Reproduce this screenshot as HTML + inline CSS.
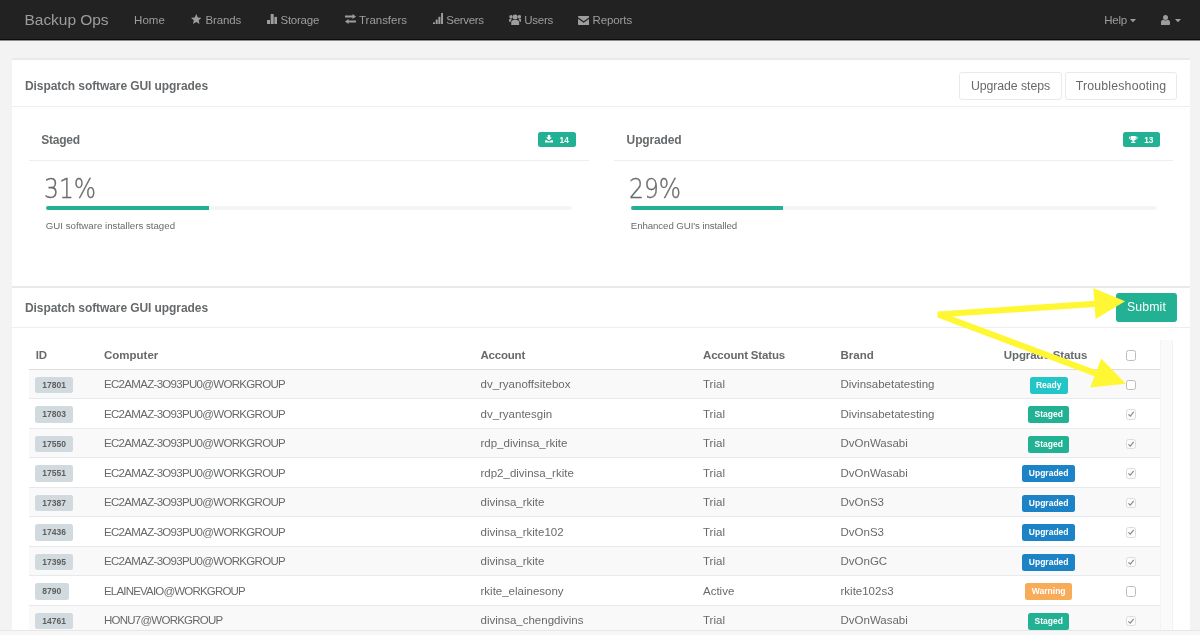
<!DOCTYPE html>
<html lang="en">
<head>
<meta charset="utf-8">
<title>Backup Ops</title>
<style>
*{box-sizing:border-box;margin:0;padding:0}
html,body{width:1200px;height:635px;overflow:hidden}
body{background:#f3f3f4;font-family:"Liberation Sans",sans-serif;color:#676a6c;font-size:12px;position:relative}
#wrap{position:absolute;left:-10px;top:-10px;width:1220px;height:655px;background:#f3f3f4;will-change:transform}
#in{position:absolute;left:10px;top:10px;width:1200px;height:635px}
#navbg{position:absolute;left:-10px;top:-10px;width:1220px;height:51px;background:#222;border-bottom:1px solid #8c8c8c;box-shadow:inset 0 -1px 0 #0c0c0c}
#nav{position:absolute;left:0;top:0;width:1200px;height:40px}
#nav .brand{position:absolute;left:24.5px;top:9px;font-size:15.5px;color:#9d9d9d;line-height:22px;letter-spacing:-.04px}
#nav .it{position:absolute;top:11.5px;font-size:11.5px;color:#9d9d9d;line-height:17px;white-space:nowrap}
#nav svg{position:absolute;fill:#9d9d9d}
.panel{position:absolute;left:12px;width:1178px;background:#fff;border-top:2px solid #e7eaec}
.hr{position:absolute;height:1px;background:#eceef0}
.h5{position:absolute;font-weight:bold;font-size:12px;color:#676a6c;line-height:16px;white-space:nowrap}
.btnw{position:absolute;top:72px;height:28px;border:1px solid #e7eaec;border-radius:3px;background:#fff;color:#676a6c;font-size:12.3px;line-height:27px;text-align:center;white-space:nowrap}
.badge{position:absolute;height:14.5px;border-radius:2.5px;background:#22b193;color:#fff;font-weight:bold;font-size:8.3px;line-height:14.5px;white-space:nowrap}
.badge svg{position:absolute;fill:#fff}
.badge span{position:absolute;top:.3px}
.big{position:absolute;font-family:"DejaVu Sans Light","DejaVu Sans","Liberation Sans",sans-serif;font-weight:200;font-size:26.3px;color:#676a6c;line-height:30px;white-space:nowrap;transform:scaleX(.89);transform-origin:0 0;-webkit-text-stroke:.35px #676a6c}
.prog{position:absolute;height:4px;background:#f5f5f5;border-radius:2px;overflow:hidden}
.prog i{display:block;height:4px;background:#22b193}
.small{position:absolute;font-size:9.7px;line-height:12px;color:#676a6c;white-space:nowrap}

#tbl{position:absolute;left:0;top:0;width:1200px;height:635px;overflow:hidden}
.th{position:absolute;top:347px;font-weight:bold;font-size:11.5px;line-height:16px;color:#676a6c;white-space:nowrap}
.hl{position:absolute;left:29px;top:369px;width:1131px;height:1px;background:#dddddd}
.tr{position:absolute;left:29px;width:1131px;height:29.5px;border-top:1px solid #e7eaec;background:#fff}
.tr.odd{background:#f9f9f9}
.td{position:absolute;top:7px;font-size:11.5px;line-height:16px;color:#676a6c;white-space:nowrap}
.odd .td{top:6.5px}
.c1{left:75px;letter-spacing:-.69px}
.c2{left:451.5px}
.c3{left:674px}
.c4{left:811.5px}
.id{position:absolute;left:6px;top:7px;height:16.5px;padding:0 7.3px;border-radius:2.5px;background:#d1dade;color:#5e5e5e;font-weight:bold;font-size:8.5px;line-height:17px;white-space:nowrap}
.lbw{position:absolute;left:959.7px;width:120px;top:7px;height:17px;text-align:center}
.lb{display:inline-block;height:17px;padding:0 6.4px;border-radius:2.5px;color:#fff;font-weight:bold;font-size:8.5px;line-height:17.8px;white-space:nowrap;vertical-align:top}
.upgraded{padding:0 6.8px}
.ready{background:#23c6c8}.staged{background:#22b193}.upgraded{background:#1c84c6}.warning{background:#f8ac59}
.cb{position:absolute;left:1125.5px;width:10.5px;height:10.5px;border:1px solid #bcbcbc;border-radius:2.5px;background:#fff}
.tr .cb{left:1096.5px;top:10px}
.cb.on{border-color:#dcdcdc;background:#fcfcfc}
.cb svg{position:absolute;left:-1px;top:-1px}
#sb{position:absolute;left:1160px;top:340px;width:12.5px;height:295px;background:#fafafa;border-left:1px solid #f3f3f3;border-right:1px solid #f1f1f1}
#submit{position:absolute;left:1116px;top:293px;width:61px;height:28.5px;border-radius:3px;background:#22b193;color:#fff;font-size:12.3px;letter-spacing:.1px;line-height:29.5px;text-align:center}
#foot{position:absolute;left:-10px;top:630px;width:1220px;height:15px;background:#f7f7f7;border-top:1px solid #e6e6e6}
#arrows{position:absolute;left:0;top:0}
</style>
</head>
<body>
<div id="wrap"><div id="in">
<div id="navbg"></div>
<div id="nav">
  <div class="brand">Backup Ops</div>
  <div class="it" style="left:134px;letter-spacing:.08px">Home</div>
  <svg style="left:190.5px;top:14px" width="10.5" height="10" viewBox="0 0 21 20"><path d="M10.5 0 L13.6 6.9 L21 7.6 L15.4 12.6 L17 20 L10.5 16.2 L4 20 L5.6 12.6 L0 7.6 L7.4 6.9 Z"/></svg>
  <div class="it" style="left:205.5px;letter-spacing:-.16px">Brands</div>
  <svg style="left:267px;top:14px" width="10.4" height="10.4" viewBox="0 0 10.4 10.4"><rect x="0" y="6" width="3" height="4.4"/><rect x="3.7" y="0" width="3" height="10.4"/><rect x="7.4" y="2.9" width="3" height="7.5"/></svg>
  <div class="it" style="left:280.5px;letter-spacing:-.25px">Storage</div>
  <svg style="left:345px;top:13.5px" width="11" height="10" viewBox="0 0 22 20"><path d="M0 3.2 H15 V0 L22 5 L15 10 V6.8 H0 Z M22 13.2 H7 V10 L0 15 L7 20 V16.8 H22 Z"/></svg>
  <div class="it" style="left:359px;letter-spacing:-.02px">Transfers</div>
  <svg style="left:433px;top:13px" width="10.2" height="11.4" viewBox="0 0 10.2 11.4"><rect x="0" y="9.4" width="2" height="2"/><rect x="2.7" y="6.6" width="2" height="4.8"/><rect x="5.4" y="3.8" width="2" height="7.6"/><rect x="8.1" y="0" width="2" height="11.4"/></svg>
  <div class="it" style="left:446.3px;letter-spacing:-.32px">Servers</div>
  <svg style="left:509px;top:13.5px" width="12.4" height="11.5" viewBox="0 0 24.8 23"><circle cx="12.4" cy="6" r="5"/><circle cx="4" cy="5.5" r="3.4"/><circle cx="20.8" cy="5.5" r="3.4"/><path d="M4.5 23 V17 C4.5 13.5 7 12 9 12 H15.8 C17.8 12 20.3 13.5 20.3 17 V23 Z"/><path d="M0 15.5 V12.5 C0 10.3 1.6 9.4 3 9.4 H6.5 C5 10.6 3.6 12.5 3.6 15.5 Z M24.8 15.5 V12.5 C24.8 10.3 23.2 9.4 21.8 9.4 H18.3 C19.8 10.6 21.2 12.5 21.2 15.5 Z"/></svg>
  <div class="it" style="left:524.3px;letter-spacing:-.25px">Users</div>
  <svg style="left:578px;top:15.5px" width="11.4" height="9" viewBox="0 0 22.8 18"><path d="M0 1.5 C0 .6 .6 0 1.5 0 H21.3 C22.2 0 22.8 .6 22.8 1.5 V2.6 L11.4 10.6 L0 2.6 Z M0 5.4 L11.4 13.4 L22.8 5.4 V16.5 C22.8 17.4 22.2 18 21.3 18 H1.5 C.6 18 0 17.4 0 16.5 Z"/></svg>
  <div class="it" style="left:592.4px;letter-spacing:-.07px">Reports</div>
  <div class="it" style="left:1104.3px;letter-spacing:-.29px">Help</div>
  <svg style="left:1130px;top:18.6px" width="6" height="3.4" viewBox="0 0 6 3.4"><path d="M0 0 H6 L3 3.4 Z"/></svg>
  <svg style="left:1161px;top:14.6px" width="9" height="10" viewBox="0 0 18 20"><circle cx="9" cy="5" r="5"/><path d="M0 20 V15 C0 11.4 2.4 9.6 4.6 9.4 C6 10.6 7.4 11 9 11 C10.6 11 12 10.6 13.4 9.4 C15.6 9.6 18 11.4 18 15 V18 C18 19.2 17.2 20 16 20 Z"/></svg>
  <svg style="left:1175px;top:18.6px" width="6" height="3.4" viewBox="0 0 6 3.4"><path d="M0 0 H6 L3 3.4 Z"/></svg>
</div>

<div class="panel" style="top:58px;height:228px"></div>
<div class="h5" style="left:25px;top:78px;letter-spacing:-.08px">Dispatch software GUI upgrades</div>
<div class="btnw" style="left:959px;width:103px;letter-spacing:-.06px">Upgrade steps</div>
<div class="btnw" style="left:1065px;width:112px;letter-spacing:.18px">Troubleshooting</div>
<div class="hr" style="left:12px;top:106px;width:1178px"></div>

<div class="h5" style="left:41.3px;top:131.5px;letter-spacing:-.25px">Staged</div>
<div class="badge" style="left:538px;top:132.3px;width:38px"><svg style="left:6.8px;top:3px" width="8" height="7.5" viewBox="0 0 16 15"><path d="M5.5 0 H10.5 V5 H14 L8 10.6 L2 5 H5.5 Z M0 10.5 H3.6 L8 13.2 L12.4 10.5 H16 V15 H0 Z"/></svg><span style="left:21.6px">14</span></div>
<div class="hr" style="left:29px;top:160px;width:560px"></div>
<div class="big" style="left:43.5px;top:174px">31%</div>
<div class="prog" style="left:45.5px;top:206px;width:526.5px"><i style="width:163.3px"></i></div>
<div class="small" style="left:45.8px;top:220px">GUI software installers staged</div>

<div class="h5" style="left:626.6px;top:131.5px;letter-spacing:-.13px">Upgraded</div>
<div class="badge" style="left:1123px;top:132.3px;width:37px"><svg style="left:6.4px;top:4px" width="8.6" height="7" viewBox="0 0 17.2 14"><path d="M4 0 H13.2 V1.4 H17.2 V3.6 C17.2 5.8 15.4 7.4 12.6 7.6 C11.8 8.8 10.8 9.4 9.8 9.7 V11.6 H11.6 C12.4 11.6 13 12.2 13 13 V14 H4.2 V13 C4.2 12.2 4.8 11.6 5.6 11.6 H7.4 V9.7 C6.4 9.4 5.4 8.8 4.6 7.6 C1.8 7.4 0 5.8 0 3.6 V1.4 H4 Z M1.4 2.8 V3.6 C1.4 4.8 2.4 5.8 3.9 6.1 C3.6 5.2 3.5 4.2 3.5 2.8 Z M15.8 2.8 H13.7 C13.7 4.2 13.6 5.2 13.3 6.1 C14.8 5.8 15.8 4.8 15.8 3.6 Z"/></svg><span style="left:21.2px">13</span></div>
<div class="hr" style="left:614px;top:160px;width:559px"></div>
<div class="big" style="left:628.5px;top:174px">29%</div>
<div class="prog" style="left:630.5px;top:206px;width:526.5px"><i style="width:152.3px"></i></div>
<div class="small" style="left:630.8px;top:220px;letter-spacing:-.09px">Enhanced GUI's installed</div>

<div class="panel" style="top:286px;height:349px"></div>
<div class="h5" style="left:25px;top:300px;letter-spacing:-.08px">Dispatch software GUI upgrades</div>
<div class="hr" style="left:12px;top:327px;width:1178px"></div>

<div id="sb"></div>
<div id="tbl">
<div class="th" style="left:35.8px;letter-spacing:-.25px">ID</div><div class="th" style="left:104px">Computer</div><div class="th" style="left:480.5px;letter-spacing:-.21px">Account</div><div class="th" style="left:703px;letter-spacing:-.17px">Account Status</div><div class="th" style="left:840.5px">Brand</div><div class="th" style="left:1003.8px;letter-spacing:-.11px">Upgrade Status</div>
<div class="cb" style="top:350px"></div>
<div class="tr odd" style="top:368.5px"><span class="id">17801</span><span class="td c1">EC2AMAZ-3O93PU0@WORKGROUP</span><span class="td c2">dv_ryanoffsitebox</span><span class="td c3">Trial</span><span class="td c4">Divinsabetatesting</span><span class="lbw"><span class="lb ready">Ready</span></span><span class="cb"></span></div>
<div class="tr" style="top:398.0px"><span class="id">17803</span><span class="td c1">EC2AMAZ-3O93PU0@WORKGROUP</span><span class="td c2">dv_ryantesgin</span><span class="td c3">Trial</span><span class="td c4">Divinsabetatesting</span><span class="lbw"><span class="lb staged">Staged</span></span><span class="cb on"><svg viewBox="0 0 10 10" width="10" height="10"><path d="M2.4 5.3 L4.3 7.2 L7.7 2.8" fill="none" stroke="#8a8a8a" stroke-width="1.2"/></svg></span></div>
<div class="tr odd" style="top:427.5px"><span class="id">17550</span><span class="td c1">EC2AMAZ-3O93PU0@WORKGROUP</span><span class="td c2">rdp_divinsa_rkite</span><span class="td c3">Trial</span><span class="td c4">DvOnWasabi</span><span class="lbw"><span class="lb staged">Staged</span></span><span class="cb on"><svg viewBox="0 0 10 10" width="10" height="10"><path d="M2.4 5.3 L4.3 7.2 L7.7 2.8" fill="none" stroke="#8a8a8a" stroke-width="1.2"/></svg></span></div>
<div class="tr" style="top:457.0px"><span class="id">17551</span><span class="td c1">EC2AMAZ-3O93PU0@WORKGROUP</span><span class="td c2">rdp2_divinsa_rkite</span><span class="td c3">Trial</span><span class="td c4">DvOnWasabi</span><span class="lbw"><span class="lb upgraded">Upgraded</span></span><span class="cb on"><svg viewBox="0 0 10 10" width="10" height="10"><path d="M2.4 5.3 L4.3 7.2 L7.7 2.8" fill="none" stroke="#8a8a8a" stroke-width="1.2"/></svg></span></div>
<div class="tr odd" style="top:486.5px"><span class="id">17387</span><span class="td c1">EC2AMAZ-3O93PU0@WORKGROUP</span><span class="td c2">divinsa_rkite</span><span class="td c3">Trial</span><span class="td c4">DvOnS3</span><span class="lbw"><span class="lb upgraded">Upgraded</span></span><span class="cb on"><svg viewBox="0 0 10 10" width="10" height="10"><path d="M2.4 5.3 L4.3 7.2 L7.7 2.8" fill="none" stroke="#8a8a8a" stroke-width="1.2"/></svg></span></div>
<div class="tr" style="top:516.0px"><span class="id">17436</span><span class="td c1">EC2AMAZ-3O93PU0@WORKGROUP</span><span class="td c2">divinsa_rkite102</span><span class="td c3">Trial</span><span class="td c4">DvOnS3</span><span class="lbw"><span class="lb upgraded">Upgraded</span></span><span class="cb on"><svg viewBox="0 0 10 10" width="10" height="10"><path d="M2.4 5.3 L4.3 7.2 L7.7 2.8" fill="none" stroke="#8a8a8a" stroke-width="1.2"/></svg></span></div>
<div class="tr odd" style="top:545.5px"><span class="id">17395</span><span class="td c1">EC2AMAZ-3O93PU0@WORKGROUP</span><span class="td c2">divinsa_rkite</span><span class="td c3">Trial</span><span class="td c4">DvOnGC</span><span class="lbw"><span class="lb upgraded">Upgraded</span></span><span class="cb on"><svg viewBox="0 0 10 10" width="10" height="10"><path d="M2.4 5.3 L4.3 7.2 L7.7 2.8" fill="none" stroke="#8a8a8a" stroke-width="1.2"/></svg></span></div>
<div class="tr" style="top:575.0px"><span class="id">8790</span><span class="td c1" style="letter-spacing:-.81px">ELAINEVAIO@WORKGROUP</span><span class="td c2">rkite_elainesony</span><span class="td c3">Active</span><span class="td c4">rkite102s3</span><span class="lbw"><span class="lb warning">Warning</span></span><span class="cb"></span></div>
<div class="tr odd" style="top:604.5px"><span class="id">14761</span><span class="td c1" style="letter-spacing:-.76px">HONU7@WORKGROUP</span><span class="td c2">divinsa_chengdivins</span><span class="td c3">Trial</span><span class="td c4">DvOnWasabi</span><span class="lbw"><span class="lb staged">Staged</span></span><span class="cb on"><svg viewBox="0 0 10 10" width="10" height="10"><path d="M2.4 5.3 L4.3 7.2 L7.7 2.8" fill="none" stroke="#8a8a8a" stroke-width="1.2"/></svg></span></div>
<div class="hl"></div>
</div>
<div id="submit">Submit</div>
<svg id="arrows" width="1200" height="635" viewBox="0 0 1200 635">
  <g fill="#fff733" stroke="none">
    <polygon points="937.5,311.5 1094.5,300.7 1095,306.9 937.5,317.5"/>
    <polygon points="1093.3,288 1095.6,319 1125.1,301.2"/>
    <polygon points="939,311.5 1097.5,370.7 1095.2,376.5 937.5,317.5"/>
    <polygon points="1101.3,358.4 1090.2,387.5 1125.8,383.8"/>
  </g>
</svg>
<div id="foot"></div>
</div></div>
</body>
</html>
